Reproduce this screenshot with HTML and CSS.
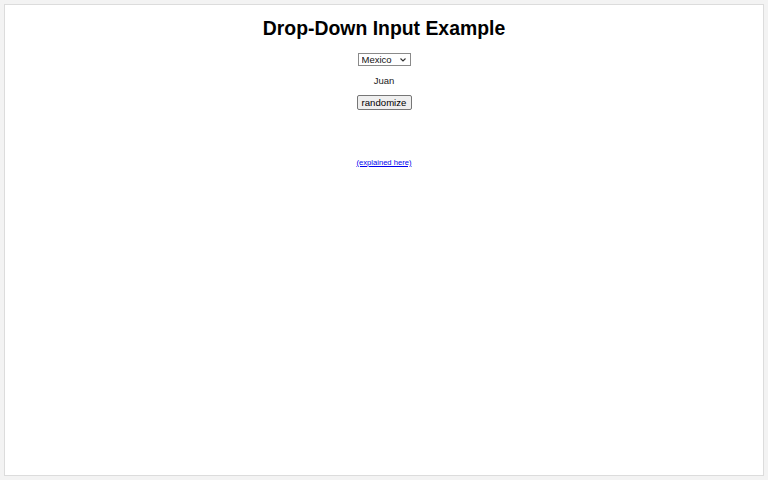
FILE: index.html
```html
<!DOCTYPE html>
<html>
<head>
<meta charset="utf-8">
<link rel="stylesheet" href="styles.css">
</head>
<body>
<div class="card">
  <h1 class="title">Drop-Down Input Example</h1>
  <div class="row">
    <select class="sel">
      <option>Mexico</option>
      <option>USA</option>
      <option>Canada</option>
    </select>
  </div>
  <div class="name">Juan</div>
  <div class="row">
    <button class="btn">randomize</button>
  </div>
  <div class="link-row"><a href="#" class="link">(explained here)</a></div>
</div>
</body>
</html>
```
FILE: styles.css
```css
html, body {
  margin: 0;
  padding: 0;
}
body {
  background: #f3f3f3;
  padding: 4px;
  font-family: "Liberation Sans", Arial, sans-serif;
  box-sizing: border-box;
  height: 480px;
}
.card {
  background: #fff;
  border: 1px solid #dcdcdc;
  box-sizing: border-box;
  width: 760px;
  height: 472px;
  text-align: center;
  padding-top: 12px;
}
.title {
  font-size: 19.4px;
  font-weight: bold;
  margin: 0 0 13px 0;
  line-height: 23px;
  color: #000;
}
.row {
  line-height: 0;
}
.sel {
  -webkit-appearance: none;
  appearance: none;
  font-family: "Liberation Sans", Arial, sans-serif;
  font-size: 9.5px;
  color: #111;
  height: 13px;
  width: 53px;
  padding: 0 0 0 3px;
  margin: 0;
  border: 1px solid #8a8a8a;
  border-radius: 0;
  background: #fff url("data:image/svg+xml;utf8,<svg xmlns='http://www.w3.org/2000/svg' width='6' height='4' viewBox='0 0 6 4'><path d='M0.5 0.5 L3 3 L5.5 0.5' fill='none' stroke='%23333' stroke-width='1.1'/></svg>") no-repeat right 4px center;
  background-size: 6px 4px;
  text-align: left;
}
.name {
  font-size: 9.5px;
  margin: 9px 0 9px 0;
  line-height: 11px;
  color: #222;
}
.btn {
  font-family: "Liberation Sans", Arial, sans-serif;
  font-size: 9.6px;
  color: #000;
  height: 15px;
  width: 55px;
  padding: 0;
  margin: 0;
  background: #efefef;
  border: 1px solid #767676;
  border-radius: 2px;
}
.link-row {
  margin-top: 48px;
  font-size: 7.6px;
  line-height: 9px;
}
.link {
  color: #0000ee;
}
```
